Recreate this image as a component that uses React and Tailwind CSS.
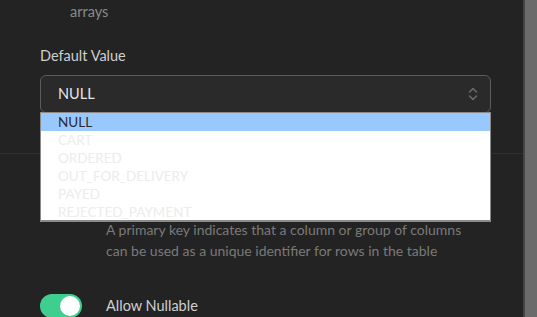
import React from "react";

const options = ["NULL", "CART", "ORDERED", "OUT_FOR_DELIVERY", "PAYED", "REJECTED_PAYMENT"];

function Toggle({ on, className = "" }) {
  return (
    <div className={`w-[42px] h-[24px] rounded-full flex items-center px-[2px] shrink-0 ${on ? "bg-[#3ecf8e] justify-end" : "bg-[#3a3a3a] justify-start"} ${className}`}>
      <div className="w-[20px] h-[20px] rounded-full bg-white" />
    </div>
  );
}

export default function App() {
  return (
    <div className="w-[537px] h-[317px] overflow-hidden flex bg-[#232323] font-['Lato',sans-serif] text-[14.5px] leading-[20px]">
      <div className="relative flex-grow flex flex-col">
        {/* Array option tail */}
        <p className="pl-[70px] pt-[2px] text-[#8a8a8a]">arrays</p>

        {/* Default value */}
        <div className="pl-[40px] pr-[32px] pt-[24px]">
          <label className="block text-[#cfcfcf]">Default Value</label>
          <div className="mt-[9px] h-[38px] rounded-[6px] border border-[#5c5c5c] bg-[#2a2a2a] flex items-center justify-between pl-[17px] pr-[11px]">
            <span className="text-[#e6e6e6]">NULL</span>
            <svg width="12" height="16" viewBox="0 0 12 16" fill="none" stroke="#6a6a6a" strokeWidth="1.6" strokeLinecap="round" strokeLinejoin="round">
              <path d="M2.5 6 L6 2.5 L9.5 6" />
              <path d="M2.5 10 L6 13.5 L9.5 10" />
            </svg>
          </div>
        </div>

        <div className="mt-[40px] border-t border-[#2f2f2f]" />

        {/* Primary key */}
        <div className="px-[40px] pt-[45px] flex items-start gap-[24px]">
          <Toggle on={false} className="-mt-[2px]" />
          <div className="flex flex-col">
            <span className="text-[#cfcfcf]">Is Primary Key</span>
            <p className="text-[14px] text-[#7a7a7a] leading-[21px] w-[375px]">
              A primary key indicates that a column or group of columns can be used as a unique identifier for rows in the table
            </p>
          </div>
        </div>

        {/* Nullable */}
        <div className="px-[40px] pt-[33px] flex items-center gap-[24px]">
          <Toggle on={true} />
          <span className="text-[#cfcfcf]">Allow Nullable</span>
        </div>

        {/* Native select dropdown */}
        <div className="absolute left-[40px] top-[112px] w-[451px] h-[110px] bg-white border border-[#8a8a8a] border-b-2 flex flex-col text-[13.5px] leading-[18px]">
          {options.map((o, i) => (
            <div
              key={o}
              className={`h-[18px] pl-[17px] ${i === 0 ? "bg-[#99c8ff] text-[#2a2a2a]" : "text-[#ececec]"}`}
            >
              {o}
            </div>
          ))}
        </div>
      </div>

      {/* Panel edge / scrollbar */}
      <div className="w-[2px] bg-[#444444]" />
      <div className="w-[12px] bg-[#6b6b6b]" />
    </div>
  );
}
